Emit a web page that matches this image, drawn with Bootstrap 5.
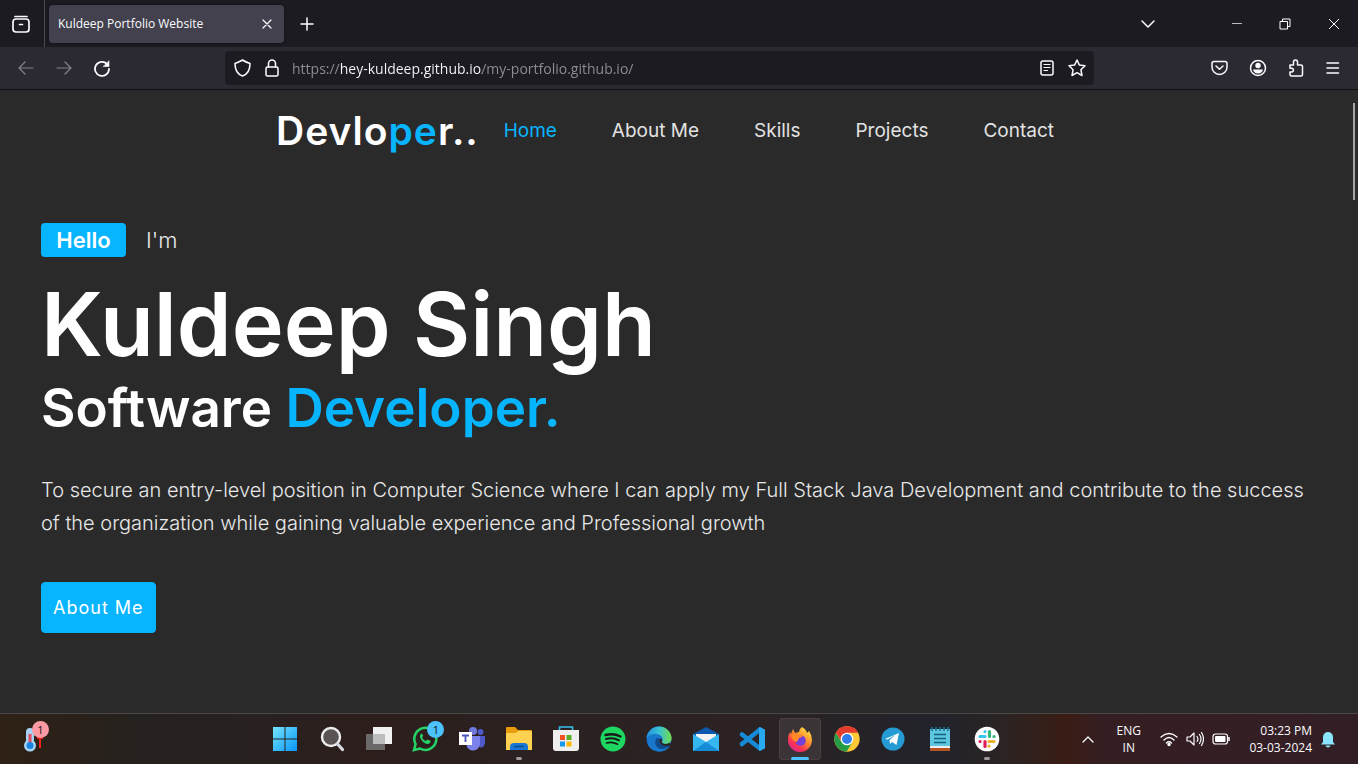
<!DOCTYPE html>
<html lang="en" data-bs-theme="dark">
<head>
<meta charset="utf-8">
<meta name="viewport" content="width=device-width, initial-scale=1">
<title>Kuldeep Portfolio Website</title>
<link rel="stylesheet" href="https://cdn.jsdelivr.net/npm/bootstrap@5.3.0/dist/css/bootstrap.min.css">
<style>
:root { --sky: #07b5ff; --page: #2a2a2a; --ui: "Open Sans", "Noto Sans", sans-serif; --site: Inter, "Open Sans", sans-serif; }
body { background: var(--page); font-family: var(--ui); color: #fbfbfe; }
svg { display: block; flex: none; }
.line-icon { fill: none; stroke: currentColor; stroke-width: 1.5; stroke-linecap: round; stroke-linejoin: round; }
.plain-btn { background: none; border: 0; padding: 0; color: inherit; display: flex; align-items: center; justify-content: center; }
.plain-btn:disabled { color: #83828a; }
/* browser chrome */
.tab-strip { background: #1c1b22; height: 47px; }
.view-btn { width: 45px; height: 47px; padding-right: 2px; border-right: 1px solid #4a4953; }
.active-tab { background: #42414d; border-radius: 4px; width: 235px; height: 38px; margin-left: 4px; padding: 0 12px 0 9px; font-size: 12px; box-shadow: 0 0 3px #0008; }
.window-keys { width: 134px; margin-right: 17px; }
.tool-strip { background: #2b2a33; height: 43px; border-bottom: 1px solid #111015; }
.tool-strip .nav-keys { width: 225px; padding-left: 18px; gap: 22px; }
.address { background: #1c1b22; border-radius: 4px; height: 34px; padding: 0 8px 0 9px; gap: 14px; }
.address input { border: 0; outline: 0; padding: 0; margin-left: -1px; font-size: 14px; color: transparent;
  background: linear-gradient(90deg, #8f8e96 48px, #fbfbfe 48px 190px, #8f8e96 190px); -webkit-background-clip: text; background-clip: text; }
.tool-strip .tool-keys { width: 264px; padding-right: 18px; gap: 21px; }
/* site */
.site { font-family: var(--site); color: #fff; position: relative; }
.scroll-thumb { position: absolute; right: 3px; top: 13px; width: 2px; height: 97px; background: #a5a5a5; }
.site-nav { padding: 0 304px 0 276px; height: 82px; }
.brand { font-size: 39px; font-weight: 600; letter-spacing: 1px; line-height: 50px; color: #fff; text-decoration: none; }
.site-nav .menu { gap: 55px; }
.site-nav .menu a { font-size: 19px; line-height: 30px; color: #e2e2e2; text-decoration: none; }
.site-nav .menu a.current, .sky { color: var(--sky) !important; }
.hero { padding: 51px 41px 0; }
.hello { background: var(--sky); border-radius: 4px; font-size: 22px; font-weight: 600; line-height: 34px; width: 85px; text-align: center; }
.im { font-size: 22px; font-weight: 300; color: #e8e8e8; line-height: 34px; }
.hero h1 { font-size: 88px; font-weight: 600; line-height: 100px; margin: 17px 0 0; }
.hero h2 { font-size: 53px; font-weight: 600; line-height: 64px; margin: 2px 0 0; }
.hero p { font-size: 20px; font-weight: 300; line-height: 33px; color: #e8e8e8; margin: 34px 0 42px; }
.about-btn { --bs-btn-bg: var(--sky); --bs-btn-color: #fff; --bs-btn-hover-bg: #0397d8; --bs-btn-border-color: var(--sky); border-radius: 4px; font-size: 18px; letter-spacing: 1px; padding: 0 11px; line-height: 49px; }
/* taskbar */
.taskbar { height: 51px; border-top: 1px solid #4b4847; background: linear-gradient(90deg, #2f2115 0, #25211e 10%, #282120 20%, #2d1e1c 27%, #2a2120 38%, #2c2223 55%, #22232b 69%, #2b2423 74%, #3a1c14 78.5%, #351e22 81%, #321f25 100%); font-size: 12px; line-height: 17px; }
.weather-col { width: 19.44%; padding-left: 20px; }
.app-row { width: 54.8%; }
.app-row button, .weather { position: relative; width: 42px; height: 42px; border-radius: 4px; }
.app-row .focused { background: #3a3436; box-shadow: inset 0 0 0 1px #48413f; }
.count { position: absolute; width: 17px; height: 17px; border-radius: 50%; font-size: 11px; line-height: 17px; color: #111; background: #4cc2ff; top: 3px; right: 2px; text-align: center; }
.weather .count { background: #ff99a4; right: 13px; }
.running::after { content: ""; position: absolute; bottom: 0; left: 50%; margin-left: -3px; width: 6px; height: 3px; border-radius: 2px; background: #a09a99; }
.focused::after { width: 18px; margin-left: -9px; background: #4cc2ff; }
.tray { padding-right: 22px; }
.tray .lang { margin: 0 19px 0 22px; }
.tray .clock { min-width: 66px; }
</style>
</head>
<body class="d-flex flex-column min-vh-100">
<header>
  <div class="tab-strip d-flex align-items-center">
    <button class="plain-btn view-btn" aria-label="Recent browsing"><svg class="line-icon" width="20" height="20" viewBox="0 0 20 20"><path d="M4 2.500h12M2 8q0-3 3-3h10q3 0 3 3v7q0 3-3 3H5q-3 0-3-3zM8.500 10.500h3" stroke-width="1.700"/></svg></button>
    <div class="active-tab d-flex align-items-center justify-content-between"><span>Kuldeep Portfolio Website</span>
      <button class="plain-btn" aria-label="Close tab"><svg class="line-icon" width="10" height="10"><path d="M1 1l8 8M9 1L1 9" stroke-width="1.200"/></svg></button></div>
    <button class="plain-btn ms-3" aria-label="New tab"><svg class="line-icon" width="14" height="14"><path d="M7 1v12M1 7h12"/></svg></button>
    <button class="plain-btn ms-auto me-1" aria-label="List all tabs"><svg class="line-icon" width="14" height="10"><path d="M1 2l6 6 6-6"/></svg></button>
    <div class="window-keys d-flex align-items-center justify-content-between ms-5 ps-4">
      <button class="plain-btn" aria-label="Minimize"><svg width="12" height="12"><path d="M1 5.500h10" stroke="#bbb"/></svg></button>
      <button class="plain-btn" aria-label="Restore"><svg width="12" height="12" fill="none" stroke="#fff"><path d="M1 3.500h7.500v7.500H1zM3.500 3V1H11v7.500H9"/></svg></button>
      <button class="plain-btn" aria-label="Close"><svg width="14" height="14" stroke="#fff"><path d="M2 2l10 10M12 2L2 12"/></svg></button>
    </div>
  </div>
  <div class="tool-strip d-flex align-items-center">
    <div class="nav-keys d-flex align-items-center">
      <button class="plain-btn" disabled aria-label="Back"><svg class="line-icon" width="16" height="16"><path d="M15 8H1M7 2L1 8l6 6" stroke-width="1.200"/></svg></button>
      <button class="plain-btn" disabled aria-label="Forward"><svg class="line-icon" width="16" height="16"><path d="M1 8h14M9 2l6 6-6 6" stroke-width="1.200"/></svg></button>
      <button class="plain-btn" aria-label="Reload"><svg class="line-icon" width="17" height="17"><path d="M15 9a7 7 0 1 1-2-5" stroke-width="1.800"/><path d="M15 1v5.500H9.500z" fill="currentColor" stroke-width=".6"/></svg></button>
    </div>
    <div class="address d-flex align-items-center flex-grow-1">
      <svg class="line-icon" width="17" height="18"><path d="M8.500 1Q11.500 3 16 4.500C16 11 13 15.500 8.500 17 4 15.500 1 11 1 4.500 5.500 3 6 2.500 8.500 1z" stroke-width="1.600"/></svg>
      <svg class="line-icon" width="14" height="18"><rect x="1" y="8" width="12" height="9" rx="1.500"/><path d="M3.500 8V4.500a3.500 3.500 0 0 1 7 0V8" stroke-width="1.600"/></svg>
      <input class="flex-grow-1" type="text" aria-label="Address" value="https://hey-kuldeep.github.io/my-portfolio.github.io/">
      <button class="plain-btn" aria-label="Reader view"><svg class="line-icon" width="14" height="16"><rect x="1" y="1" width="12" height="14" rx="2"/><path d="M4 4.500h6M4 7.500h6M4 10.500h3.500" stroke-width="1.200"/></svg></button>
      <button class="plain-btn" aria-label="Bookmark"><svg class="line-icon" width="18" height="18"><path d="M9 1l2.400 5.100 5.600.7-4.100 3.900 1.100 5.800L9 13.700l-5 2.800 1.100-5.800L1 6.800l5.600-.7z"/></svg></button>
    </div>
    <div class="tool-keys d-flex align-items-center justify-content-end">
      <button class="plain-btn" aria-label="Pocket"><svg class="line-icon" width="17" height="16"><path d="M3 1.500h11q2 0 2 2V7a7.500 7.500 0 0 1-15 0V3.500q0-2 2-2zM5 6l3.500 3.300L12 6"/></svg></button>
      <button class="plain-btn" aria-label="Account"><svg width="18" height="18"><circle cx="9" cy="9" r="7.500" fill="none" stroke="#fbfbfe" stroke-width="1.500"/><circle cx="9" cy="6.500" r="2.700" fill="#fbfbfe"/><path d="M4 10.500h10q-1 4-5 4t-5-4z" fill="#fbfbfe"/></svg></button>
      <button class="plain-btn" aria-label="Extensions"><svg class="line-icon" width="16" height="18"><path d="M2 6h3.500V3a2 2 0 0 1 4 0v3H13q1.500 0 1.500 1.500v8q0 1.500-1.500 1.500H3.500Q2 17 2 15.500V13h1.500a1.900 1.900 0 0 0 0-3.800H2z"/></svg></button>
      <button class="plain-btn" aria-label="Menu"><svg class="line-icon" width="15" height="12"><path d="M2 1h11.500M2 6h11.500M2 11h11.500"/></svg></button>
    </div>
  </div>
</header>

<main class="site flex-grow-1">
  <div class="scroll-thumb"></div>
  <nav class="site-nav d-flex align-items-center justify-content-between">
    <a class="brand" href="#">Devlo<span class="sky">pe</span>r..</a>
    <div class="menu d-flex">
      <a class="current" href="#home">Home</a><a href="#about">About Me</a><a href="#skills">Skills</a><a href="#projects">Projects</a><a href="#contact">Contact</a>
    </div>
  </nav>
  <section class="hero" id="home">
    <div class="d-flex"><span class="hello">Hello</span><span class="im ms-3 ps-1">I'm</span></div>
    <h1>Kuldeep Singh</h1>
    <h2>Software <span class="sky">Developer.</span></h2>
    <p>To secure an entry-level position in Computer Science where I can apply my Full Stack Java Development and contribute to the success of the organization while gaining valuable experience and Professional growth</p>
    <button class="btn about-btn">About Me</button>
  </section>
</main>

<footer class="taskbar d-flex align-items-center">
  <div class="weather-col"><button class="plain-btn weather justify-content-start" aria-label="Weather"><svg width="26" height="26"><path d="M10 2a4 4 0 0 1 4 4v9a6 6 0 1 1-8 0V6a4 4 0 0 1 4-4z" fill="#a6d3f5"/><path d="M8.500 8h3v9h-3z" fill="#e44a5c"/><circle cx="10" cy="19.500" r="3.500" fill="#1884df"/><path d="M17 11h6v2h-2v9h-2v-9h-2z" fill="#f22015"/></svg><span class="count">1</span></button></div>
  <div class="app-row d-flex justify-content-between">
    <button class="plain-btn" aria-label="Start"><svg width="26" height="26"><defs><linearGradient id="win" x2="1" y2="1"><stop stop-color="#73e5ff"/><stop offset="1" stop-color="#0795f5"/></linearGradient></defs><path d="M1 1h11.500v11.500H1zM13.500 1H25v11.500H13.500zM1 13.500h11.500V25H1zM13.500 13.500H25V25H13.500z" fill="url(#win)"/></svg></button>
    <button class="plain-btn" aria-label="Search"><svg width="26" height="26"><circle cx="12" cy="11" r="9" fill="#5a5554" stroke="#eee" stroke-width="2.400"/><path d="M18.500 18l5 5.500" stroke="#d9dce5" stroke-width="3.200" stroke-linecap="round"/></svg></button>
    <button class="plain-btn" aria-label="Task view"><svg width="28" height="26"><path d="M8 1h19v17H8z" fill="#f1f1f1"/><path d="M1 8h19v16H1z" fill="#6b6968"/><path d="M8 8h12v10H8z" fill="#bcbcbc"/></svg></button>
    <button class="plain-btn" aria-label="WhatsApp"><svg width="28" height="28" fill="none"><path d="M3 25l1.600-6A11 11 0 1 1 9 23.500z" stroke="#25d366" stroke-width="2.500"/><path d="M10.500 8.500q-2 1-1.500 3.500 1.500 5 6.500 7 3 .5 4-2v-1l-3-1.500-1.700 1.600q-2.500-1-3.800-3.600l1.200-1.500-1.200-2.500z" fill="#25d366"/></svg><span class="count">1</span></button>
    <button class="plain-btn" aria-label="Teams"><svg width="28" height="26"><circle cx="15" cy="5" r="4" fill="#7078dc"/><circle cx="22.500" cy="6" r="3" fill="#5059c9"/><path d="M16 10h11v7q-1 5-5 4.500z" fill="#5059c9"/><path d="M8 10h14v8a7 7 0 0 1-13 3z" fill="#7b83eb"/><path d="M1 6h13v13H1z" fill="#fff"/><path d="M4 9.500h7M7.500 9.500V16" stroke="#4b53bc" stroke-width="1.800"/></svg></button>
    <button class="plain-btn running" aria-label="Files"><svg width="28" height="26"><path d="M1 2q0-1 1-1h8l3 3h13q1 0 1 1v5H1z" fill="#e89b0c"/><path d="M1 7h10l2-2h13q1 0 1 1v18H1z" fill="#ffd151"/><path d="M5 24v-3q0-4 4-4h10q4 0 4 4v3z" fill="#1976d2"/><path d="M9 20.500h10" stroke="#0b4d91" stroke-width="1.500"/></svg></button>
    <button class="plain-btn" aria-label="Store"><svg width="28" height="26"><path d="M7.500 5V1h13v4" fill="none" stroke="#37bfeb" stroke-width="1.600"/><path d="M1 4h26v18q0 3-3 3H4q-3 0-3-3z" fill="#efefef"/><path d="M8 9h5v5H8z" fill="#f25022"/><path d="M14.500 9h5v5h-5z" fill="#55ae24"/><path d="M8 15.500h5v5H8z" fill="#1599ed"/><path d="M14.500 15.500h5v5h-5z" fill="#ffb900"/></svg></button>
    <button class="plain-btn" aria-label="Spotify"><svg width="26" height="26"><circle cx="13" cy="13" r="12.500" fill="#1ed760"/><g fill="none" stroke="#181818" stroke-linecap="round"><path d="M5.500 9q8-2 15 1.500" stroke-width="2.400"/><path d="M6 13q7-1.800 13 1.300" stroke-width="2"/><path d="M6.500 17q6-1.500 11 1.200" stroke-width="1.700"/></g></svg></button>
    <button class="plain-btn" aria-label="Edge"><svg width="28" height="28"><defs><linearGradient id="edg"><stop stop-color="#218ddb"/><stop offset=".5" stop-color="#37c2d4"/><stop offset="1" stop-color="#74dc4b"/></linearGradient></defs><circle cx="14" cy="14" r="12.500" fill="#1469bd"/><path d="M1.500 13A12.600 12.600 0 0 1 26.600 13c0 5-4 6-7 6q-4-.5-2-3.500c1-6-8-9-16-2.500z" fill="url(#edg)"/><path d="M2 13c5-6 13-4 14 0-4-1-7 8 1 10q5 1 8-2c-4 7-17 8-22-1z" fill="#1978cc"/><path d="M12 13c-4 4-1 11 5 11q5 0 8-4-4 2-8 0t-2-6z" fill="#114a8b"/><path d="M15 14q-2 3 2 6 5 2 9 0l-1-2q-10 3-8-4z" fill="#2c2223"/></svg></button>
    <button class="plain-btn" aria-label="Mail"><svg width="28" height="26"><path d="M1 8l13-7 13 7-13 12z" fill="#0c59ad"/><path d="M4 8h20v9H4z" fill="#f3f3f3"/><path d="M1 8l13 8L27 8v17H1z" fill="#36b6ef"/><path d="M1 25l13-9 13 9z" fill="#168bd8"/></svg></button>
    <button class="plain-btn" aria-label="Visual Studio Code"><svg width="28" height="26"><path d="M3 8.500l18 14M3 18L21 3.500" stroke="#168bd6" stroke-width="4.500" stroke-linecap="round"/><path d="M20 1l6 2.500v19L20 25z" fill="#28a9f1"/></svg></button>
    <button class="plain-btn running focused" aria-label="Firefox"><svg width="26" height="27"><defs><linearGradient id="fox" x1=".9" x2=".2" y2="1"><stop stop-color="#fff044"/><stop offset=".45" stop-color="#ff8b2d"/><stop offset=".75" stop-color="#fa3151"/><stop offset="1" stop-color="#d426a0"/></linearGradient></defs><path d="M15 1q4 2 5 6l2-2q3 4 3 9a12 12 0 0 1-24 0Q1 9 3 6l1 2 2-5 2 4 4-1q0-3 3-5z" fill="url(#fox)"/><circle cx="13.500" cy="14.500" r="5.300" fill="#753fda"/><path d="M4 9q5-3 8 0l4 .5q-1 2-4 2.500l-2 4q-5-1-6-7z" fill="#ff8927"/></svg></button>
    <button class="plain-btn" aria-label="Chrome"><svg width="28" height="28"><circle cx="14" cy="14" r="12.700" fill="#fcc934"/><path d="M3 7.700A12.700 12.700 0 0 0 13.500 26.700L19.500 17 14 14 8.500 17z" fill="#269b48"/><path d="M3 7.700Q6 1.300 14 1.300T25 7.700H14L8.500 16.500z" fill="#e33b2e"/><circle cx="14" cy="14" r="6.300" fill="#fff"/><circle cx="14" cy="14" r="5" fill="#2f7de9"/></svg></button>
    <button class="plain-btn" aria-label="Telegram"><svg width="26" height="26"><circle cx="13" cy="13" r="11.500" fill="#259bd4"/><path d="M5 13l14-6-2.500 12-4.500-3-2 2-.5-4 6-5-8 4.500z" fill="#fff"/></svg></button>
    <button class="plain-btn" aria-label="Notepad"><svg width="24" height="28"><path d="M2 22h20v4H2z" fill="#b55322"/><path d="M2 4h20v19H2z" fill="#5ec6df"/><path d="M2 21h20v2H2z" fill="#eee"/><path d="M6 9.500h12M6 13.500h12M6 17.500h12" stroke="#12617f" stroke-width="1.500"/><path d="M4 2v4M8 2v4M12 2v4M16 2v4M20 2v4" stroke="#167491" stroke-width="1.500"/></svg></button>
    <button class="plain-btn running" aria-label="Slack"><svg width="26" height="26" stroke-width="3.200" stroke-linecap="round"><circle cx="13" cy="13" r="12.300" fill="#fff" stroke="none"/><path d="M11 5.500v.1M6 10.500h5" stroke="#36c5f0"/><path d="M15.500 5.500v5M20 10.500h.1" stroke="#2eb67d"/><path d="M15 15.500h5M15 20v.1" stroke="#ecb22e"/><path d="M11 15.500v5M6 15.500h.1" stroke="#e01e5a"/></svg></button>
  </div>
  <div class="tray d-flex align-items-center ms-auto">
    <button class="plain-btn" aria-label="Hidden icons"><svg class="line-icon" width="14" height="10"><path d="M2 8l5-5 5 5" stroke-width="1.300"/></svg></button>
    <div class="lang text-center">ENG<br>IN</div>
    <div class="d-flex gap-2 align-items-center me-3"><svg class="line-icon" width="18" height="16"><path d="M1 6q8-7 16 0M4 9q5-5 10 0M6.500 12q2.500-2.500 5 0" stroke-width="1.300"/><circle cx="9" cy="13.500" r="1" fill="#fff"/></svg>
      <svg class="line-icon" width="18" height="16"><path d="M1 6h3l4-4v12l-4-4H1zM11 5.500q2 2.500 0 5M13.500 3.500q3 4.500 0 9M15.500 1.500q4 6.500 0 13" stroke-width="1.200"/></svg>
      <svg width="18" height="14"><rect x="1" y="2" width="14.500" height="10" rx="2.500" fill="none" stroke="#fff" stroke-width="1.200"/><rect x="3" y="4" width="10.500" height="6" rx="1" fill="#fff"/><path d="M17 5v4" stroke="#fff" stroke-width="1.500"/></svg></div>
    <div class="clock text-end me-2">03:23 PM<br>03-03-2024</div>
    <svg width="16" height="18"><path d="M3 12V7a5 5 0 0 1 10 0v5l2 2.500H1zM5.500 15.500h5q-.5 2-2.500 2t-2.500-2z" fill="#8be5fd"/></svg>
  </div>
</footer>
<script src="https://cdn.jsdelivr.net/npm/bootstrap@5.3.0/dist/js/bootstrap.bundle.min.js"></script>
</body>
</html>
